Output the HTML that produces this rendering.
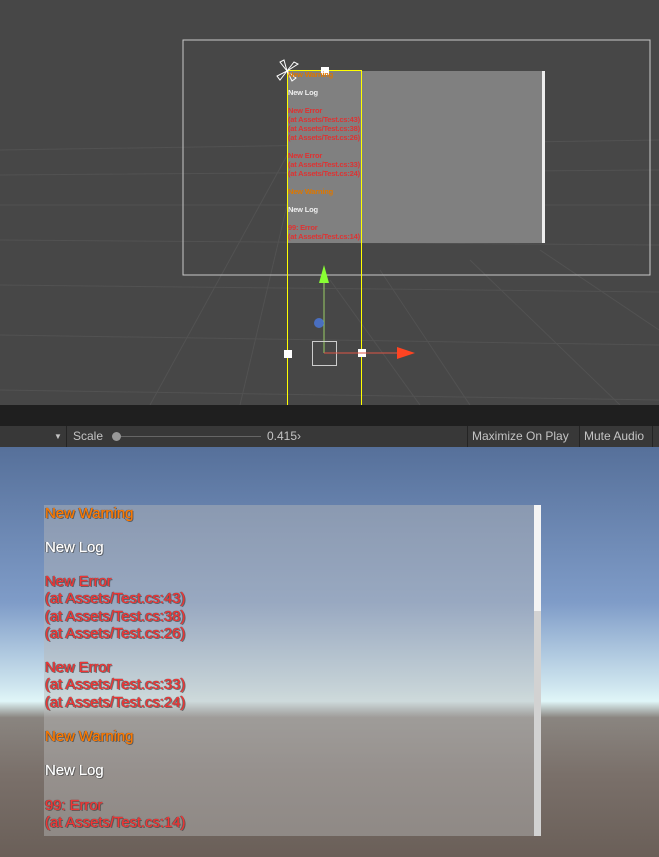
<!DOCTYPE html><html><head><style>
body{margin:0;width:659px;height:857px;overflow:hidden;background:#474747;font-family:"Liberation Sans",sans-serif;position:relative}
.a{position:absolute}
.t{position:absolute;left:45px;font-size:15px;letter-spacing:-0.1px;-webkit-text-stroke:0.2px;text-shadow:0 0 1px #444,1px 1px 0 rgba(60,60,60,.6),-1px 0 0 rgba(60,60,60,.5)}
.o{color:#ff7a00}.w{color:#fff}.r{color:#f03535}
.s{position:absolute;left:288px;font-size:7.5px;line-height:9px;font-weight:bold;letter-spacing:-0.2px}
</style></head><body>
<svg class="a" style="left:0;top:0" width="659" height="405">
<rect width="659" height="405" fill="#474747"/>
<g stroke="#525252" stroke-width="1" fill="none">
<path d="M0 150 L659 140 M0 175 L659 170 M0 205 L659 205 M0 240 L659 245 M0 285 L659 292 M0 335 L659 345 M0 390 L659 400"/>
<path d="M290 150 L150 405 M300 150 L240 405 M330 280 L420 405 M380 270 L470 405 M470 260 L620 405 M540 250 L659 330"/>
</g>
<path d="M183 40 L650 40 L650 275 L183 275 Z" stroke="#c8c8c8" fill="none"/>
<rect x="287" y="71" width="258" height="172" fill="#808080"/>
<rect x="542" y="71" width="3" height="172" fill="#eee"/>
<rect x="287.5" y="70.5" width="74" height="340" stroke="#ffff00" fill="none"/>
<rect x="321" y="67" width="8" height="8" fill="#fff"/>
<rect x="284" y="350" width="8" height="8" fill="#fff"/>
<rect x="358" y="349" width="8" height="8" fill="#fff"/>
<g stroke="#fff" fill="none"><path d="M287 71 L280 62 L284 60 Z M287 71 L294 62 L298 64 Z M287 71 L280 80 L277 76 Z M287 71 L296 78 L292 81 Z"/></g>
<line x1="324" y1="280" x2="324" y2="353" stroke="#9c6"/>
<path d="M324 265 L319 283 L329 283 Z" fill="#8f3"/>
<circle cx="319" cy="323" r="5" fill="#4a6fc0"/>
<rect x="312.5" y="341.5" width="24" height="24" stroke="#ccc" fill="none"/>
<line x1="324" y1="353" x2="397" y2="353" stroke="#d54"/>
<path d="M397 347 L415 353 L397 359 Z" fill="#f42"/>
</svg>
<div class="s" style="top:70px;color:#d70">New Warning</div>
<div class="s" style="top:88px;color:#eee">New Log</div>
<div class="s" style="top:106px;color:#d33">New Error<br>(at Assets/Test.cs:43)<br>(at Assets/Test.cs:38)<br>(at Assets/Test.cs:26)</div>
<div class="s" style="top:151px;color:#d33">New Error<br>(at Assets/Test.cs:33)<br>(at Assets/Test.cs:24)</div>
<div class="s" style="top:187px;color:#d70">New Warning</div>
<div class="s" style="top:205px;color:#eee">New Log</div>
<div class="s" style="top:223px;color:#d33">99: Error<br>(at Assets/Test.cs:14)</div>
<div class="a" style="left:0;top:405px;width:659px;height:21px;background:#1f1f1f"></div>
<div class="a" style="left:0;top:426px;width:659px;height:21px;background:#383838;color:#c4c4c4;font-size:12px;line-height:21px">
<span class="a" style="left:54px;font-size:8px">▼</span>
<div class="a" style="left:66px;top:0;width:1px;height:21px;background:#242424"></div>
<span class="a" style="left:73px">Scale</span>
<div class="a" style="left:112px;top:6px;width:9px;height:9px;border-radius:5px;background:#999"></div>
<div class="a" style="left:121px;top:10px;width:140px;height:1px;background:#666"></div>
<span class="a" style="left:267px">0.415›</span>
<div class="a" style="left:467px;top:0;width:1px;height:21px;background:#242424"></div>
<span class="a" style="left:472px">Maximize On Play</span>
<div class="a" style="left:579px;top:0;width:1px;height:21px;background:#242424"></div>
<span class="a" style="left:584px">Mute Audio</span>
<div class="a" style="left:652px;top:0;width:1px;height:21px;background:#242424"></div>
</div>
<div class="a" style="left:0;top:447px;width:659px;height:410px;background:linear-gradient(#56709a 0%,#7f9cc8 38%,#cde4ee 58%,#e0f6f8 62%,#8a8580 66%,#7a706a 80%,#6a5f58 100%)"></div>
<div class="a" style="left:44px;top:505px;width:497px;height:331px;background:rgba(185,185,185,0.45)"></div>
<div class="a" style="left:534px;top:505px;width:7px;height:331px;background:#d2d2d2"></div>
<div class="a" style="left:534px;top:505px;width:7px;height:106px;background:#f4f4f4"></div>
<div class="t o" style="top:505px">New Warning</div>
<div class="t w" style="top:539px">New Log</div>
<div class="t r" style="top:573px;line-height:17.3px">New Error<br>(at Assets/Test.cs:43)<br>(at Assets/Test.cs:38)<br>(at Assets/Test.cs:26)</div>
<div class="t r" style="top:659px;line-height:17.3px">New Error<br>(at Assets/Test.cs:33)<br>(at Assets/Test.cs:24)</div>
<div class="t o" style="top:728px">New Warning</div>
<div class="t w" style="top:762px">New Log</div>
<div class="t r" style="top:797px;line-height:17.3px">99: Error<br>(at Assets/Test.cs:14)</div>
</body></html>
